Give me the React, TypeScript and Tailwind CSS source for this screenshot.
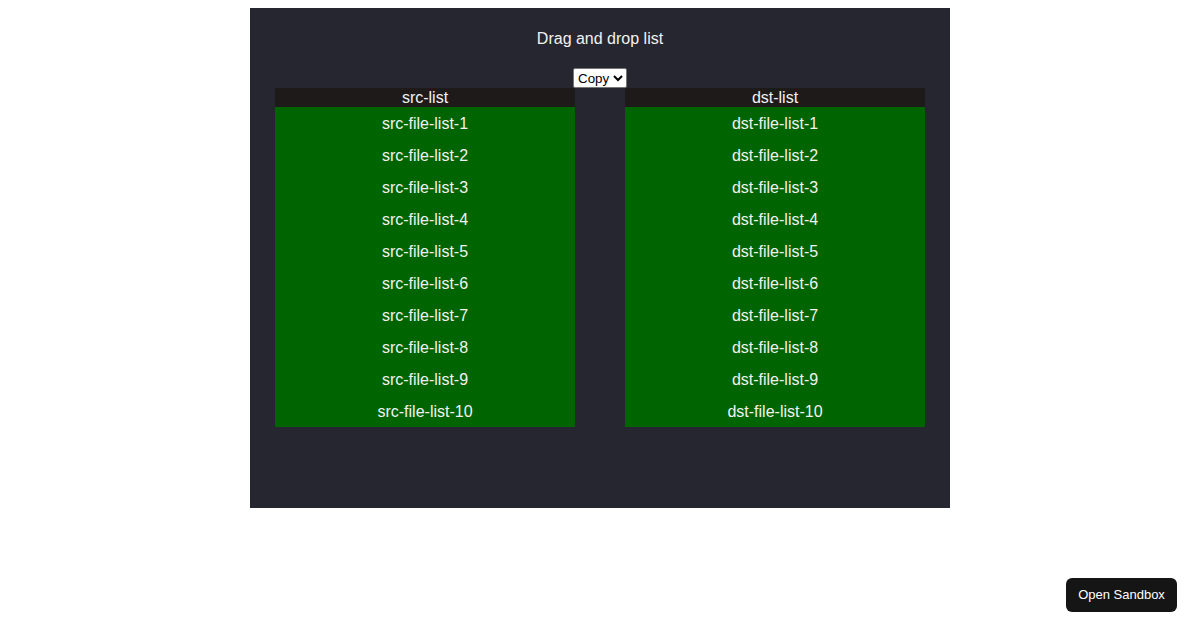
const items = Array.from({ length: 10 }, (_, i) => i + 1)

function FileList({ name }: { name: string }) {
  return (
    <div className="w-[300px] flex flex-col">
      <div className="h-[19px] bg-[#1e1a1a] text-center text-[16px] leading-[19px] text-[#f2f2f2]">{name}-list</div>
      {items.map((n) => (
        <div key={n} className="h-8 pt-[2px] bg-[#006400] flex items-center justify-center text-[16px] text-[#f2f2f2]">
          {name}-file-list-{n}
        </div>
      ))}
    </div>
  )
}

export default function App() {
  return (
    <div className="min-h-screen bg-white relative" style={{ fontFamily: '"Liberation Sans", Arial, sans-serif' }}>
      <div className="pt-2">
        <div className="mx-auto w-[700px] h-[500px] bg-[#262630] flex flex-col items-center">
          <div className="mt-[19px] h-6 leading-6 text-[16px] text-[#f2f2f2]">Drag and drop list</div>
          <select className="mt-[17px] w-[54px] h-[20px] bg-white text-black text-[13.33px] border border-[#767676] rounded-[2px] px-0 appearance-auto">
            <option>Copy</option>
            <option>Move</option>
          </select>
          <div className="w-full px-[25px] flex justify-between">
            <FileList name="src" />
            <FileList name="dst" />
          </div>
        </div>
      </div>
      <button className="absolute left-[1066px] top-[578px] w-[111px] h-[34px] rounded-md bg-[#151515] text-white text-[13px]">
        Open Sandbox
      </button>
    </div>
  )
}
